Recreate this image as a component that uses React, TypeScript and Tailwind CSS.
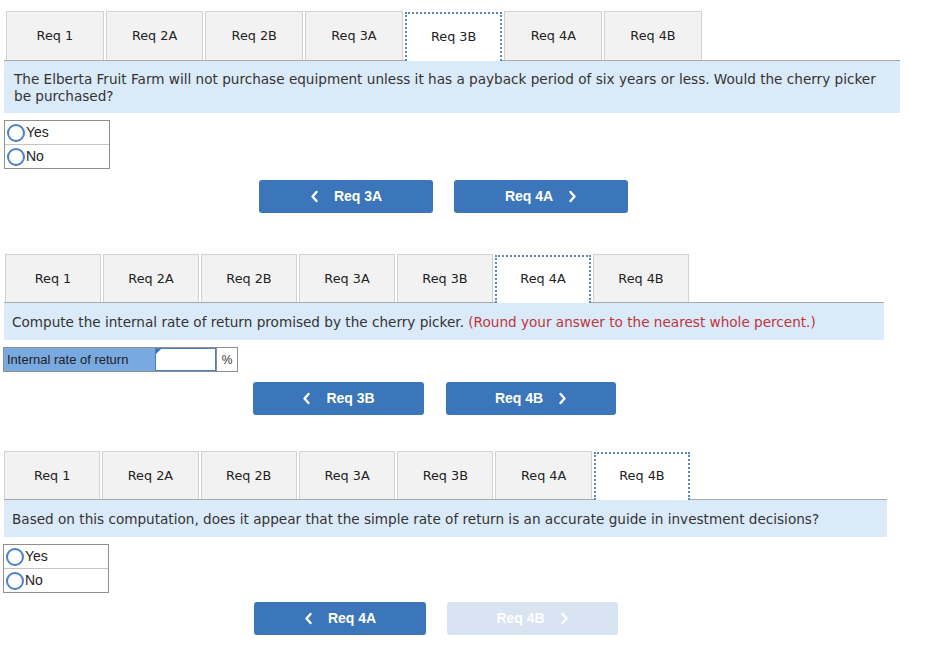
import React from 'react';

const TABS = ['Req 1', 'Req 2A', 'Req 2B', 'Req 3A', 'Req 3B', 'Req 4A', 'Req 4B'];

const verdana = { fontFamily: '"DejaVu Sans", Verdana, sans-serif' };
const arial = { fontFamily: '"Liberation Sans", Arial, sans-serif' };

const Chevron = ({ dir }: { dir: 'left' | 'right' }) => (
  <svg width="9" height="13" viewBox="0 0 9 13" className="shrink-0">
    <polyline
      points={dir === 'left' ? '6.5,2 2.5,6.5 6.5,11' : '2.5,2 6.5,6.5 2.5,11'}
      fill="none"
      stroke="white"
      strokeWidth="2.4"
      strokeLinecap="round"
      strokeLinejoin="round"
    />
  </svg>
);

const TabBar = ({ active, tabW, h, pl }: { active: number; tabW: string; h: string; pl: string }) => (
  <div className={`flex items-end gap-[2px] border-b border-[#a9a9a9] ${pl}`}>
    {TABS.map((t, i) =>
      i === active ? (
        <div
          key={t}
          className={`${tabW} ${h} -mb-px flex items-center justify-center bg-white border-2 border-b-0 border-dotted border-[#5b86c0] pb-[2px] text-[12.8px] text-[#222]`}
          style={verdana}
        >
          {t}
        </div>
      ) : (
        <div
          key={t}
          className={`${tabW} ${h} flex items-center justify-center bg-[#f2f2f2] border border-b-0 border-[#d2d2d2] text-[12.8px] text-[#222]`}
          style={verdana}
        >
          {t}
        </div>
      )
    )}
  </div>
);

const RadioBox = () => (
  <div className="w-[106px] border border-[#8f8f8f] bg-white" style={arial}>
    {['Yes', 'No'].map((o, i) => (
      <div
        key={o}
        className={`flex items-center gap-[1px] pl-[2px] text-[14px] text-[#222] ${i === 0 ? 'h-[24px] border-b border-[#c4c4c4]' : 'h-[23px]'}`}
      >
        <span className="h-[18px] w-[18px] rounded-full border-2 border-[#4a80c6] bg-white" />
        <span>{o}</span>
      </div>
    ))}
  </div>
);

const NavButton = ({ label, dir, w, disabled }: { label: string; dir: 'left' | 'right'; w: string; disabled?: boolean }) => (
  <div
    className={`${w} flex h-[33px] items-center justify-center gap-[15px] rounded-[3px] text-[14px] font-bold text-white ${disabled ? 'bg-[#d9e4f2]' : 'bg-[#3a76b9]'}`}
    style={arial}
  >
    {dir === 'left' && <Chevron dir="left" />}
    <span>{label}</span>
    {dir === 'right' && <Chevron dir="right" />}
  </div>
);

export default function App() {
  return (
    <div className="w-[925px] h-[649px] bg-white overflow-hidden pl-[4px] pt-[11px]">
      {/* Req 3B */}
      <div className="w-[896px]">
        <TabBar active={4} tabW="w-[97.7px]" h="h-[49px]" pl="pl-[2px]" />
        <div className="bg-[#daeaf8] pl-[10px] pr-[16px] pt-[10px] pb-[8px] text-[13.6px] leading-[17px] text-[#333]" style={verdana}>
          The Elberta Fruit Farm will not purchase equipment unless it has a payback period of six years or less. Would the cherry picker be purchased?
        </div>
      </div>
      <div className="mt-[7px]">
        <RadioBox />
      </div>
      <div className="mt-[11px] flex gap-[21px] pl-[255px]">
        <NavButton label="Req 3A" dir="left" w="w-[174px]" />
        <NavButton label="Req 4A" dir="right" w="w-[174px]" />
      </div>

      {/* Req 4A */}
      <div className="mt-[41px] w-[880px]">
        <TabBar active={5} tabW="w-[96px]" h="h-[48px]" pl="pl-[1px]" />
        <div className="bg-[#daeaf8] pl-[8px] pt-[11px] pb-[9px] text-[13.6px] leading-[17px] text-[#333]" style={verdana}>
          Compute the internal rate of return promised by the cherry picker.{' '}
          <span className="text-[#c0343c]">(Round your answer to the nearest whole percent.)</span>
        </div>
      </div>
      <div className="mt-[7px] ml-[-1px] flex h-[25px] w-[235px] border border-[#8f8f8f]" style={arial}>
        <div className="flex w-[151px] items-center bg-[#78a9e0] pl-[3px] text-[13px] text-[#222]">Internal rate of return</div>
        <div className="relative w-[61px] border border-[#4a7fc1] bg-white">
          <span className="absolute left-0 top-0 h-0 w-0 border-l-[5px] border-b-[5px] border-l-[#3f74ba] border-b-transparent" />
        </div>
        <div className="flex flex-1 items-center justify-center border-l border-[#8f8f8f] text-[12px] text-[#333]">%</div>
      </div>
      <div className="mt-[10px] flex gap-[22px] pl-[249px]">
        <NavButton label="Req 3B" dir="left" w="w-[171px]" />
        <NavButton label="Req 4B" dir="right" w="w-[170px]" />
      </div>

      {/* Req 4B */}
      <div className="mt-[36px] w-[883px]">
        <TabBar active={6} tabW="w-[96.3px]" h="h-[48px]" pl="pl-0" />
        <div className="bg-[#daeaf8] pl-[8px] pt-[11px] pb-[9px] text-[13.6px] leading-[17px] text-[#333]" style={verdana}>
          Based on this computation, does it appear that the simple rate of return is an accurate guide in investment decisions?
        </div>
      </div>
      <div className="mt-[7px] ml-[-1px]">
        <RadioBox />
      </div>
      <div className="mt-[9px] flex gap-[21px] pl-[250px]">
        <NavButton label="Req 4A" dir="left" w="w-[172px]" />
        <NavButton label="Req 4B" dir="right" w="w-[171px]" disabled />
      </div>
    </div>
  );
}
